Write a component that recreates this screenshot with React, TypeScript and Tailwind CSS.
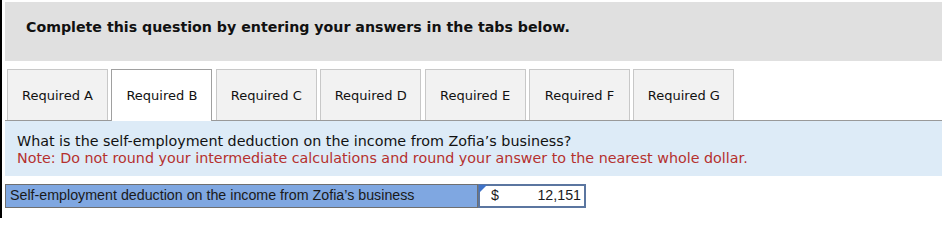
import React from 'react';

const tabs = ['Required A', 'Required B', 'Required C', 'Required D', 'Required E', 'Required F', 'Required G'];

const App = () => {
  const active = 1;

  return (
    <div className="w-[948px] h-[218px] bg-white border-l-2 border-black pl-[3px] pt-[2px] pr-[6px] overflow-hidden font-['DejaVu_Sans',Verdana,sans-serif]">
      {/* Instructions header */}
      <div className="h-[59px] bg-[#e0e0e0] pl-[21px] pt-[17px]">
        <p className="text-[14.2px] font-bold leading-[17px] text-[#111]">
          Complete this question by entering your answers in the tabs below.
        </p>
      </div>

      {/* Tabs */}
      <div className="flex gap-[3.4px] pl-[2px] pt-[8px] border-b border-[#999]">
        {tabs.map((tab, idx) => (
          <div
            key={tab}
            className={
              idx === active
                ? 'w-[101px] h-[52px] -mb-px pt-px flex items-center justify-center bg-white border border-b-0 border-[#a0a0a0] text-[13px] text-[#111]'
                : 'w-[101px] h-[51px] pt-[2px] flex items-center justify-center bg-[#f2f2f2] border border-b-0 border-[#c8c8c8] text-[13px] text-[#111]'
            }
          >
            {tab}
          </div>
        ))}
      </div>

      {/* Question */}
      <div className="bg-[#ddebf7] pl-[12px] pt-[12px] pb-[9px] text-[14.3px] leading-[17px]">
        <p className="text-[#111]">What is the self-employment deduction on the income from Zofia’s business?</p>
        <p className="text-[#b5302e]">Note: Do not round your intermediate calculations and round your answer to the nearest whole dollar.</p>
      </div>

      {/* Answer row */}
      <div className="flex mt-[8px] h-[24px] font-['Liberation_Sans',Arial,sans-serif] text-[14.25px]">
        <div className="w-[473px] bg-[#7fa7e1] border border-[#6f6f6f] pl-[4px] flex items-center text-[#1a1a1a]">
          Self-employment deduction on the income from Zofia’s business
        </div>
        <div className="relative w-[108px] bg-white border-2 border-[#5b76a0] flex items-center pl-[11px] pr-[3px] text-[#1a1a1a]">
          <span
            className="absolute -left-px -top-px w-0 h-0 border-t-[8px] border-r-[8px] border-t-[#3f73c8] border-r-transparent"
          />
          <span>$</span>
          <span className="ml-auto">12,151</span>
        </div>
      </div>
    </div>
  );
};

export default App;
